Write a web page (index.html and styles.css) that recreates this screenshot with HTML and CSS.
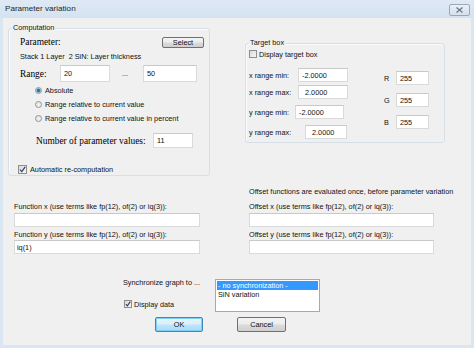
FILE: index.html
```html
<!DOCTYPE html>
<html>
<head>
<meta charset="utf-8">
<link rel="stylesheet" href="styles.css">
</head>
<body>
<div class="window">
  <div class="titlebar">
    <span class="title">Parameter variation</span>
    <span class="close"><svg width="7" height="6" viewBox="0 0 7 6"><path d="M0.5 0.5 L6.5 5.5 M6.5 0.5 L0.5 5.5" stroke="#6b7789" stroke-width="1.3" fill="none"/></svg></span>
  </div>
  <div class="client">
    <div class="top">
      <fieldset class="group comp">
        <legend>Computation</legend>
        <div class="gbody comp-body">
          <div class="row r-param"><span class="serif">Parameter:</span><button class="btn select">Select</button></div>
          <div class="row r-stack">Stack 1 Layer&nbsp; 2 SiN: Layer thickness</div>
          <div class="row r-range"><span class="serif lbl-range">Range:</span><input class="field f-r1" value="20"><span class="dots">...</span><input class="field f-r2" value="50"></div>
          <div class="radios">
            <div class="row rrow first"><span class="radio on"></span>Absolute</div>
            <div class="row rrow"><span class="radio"></span>Range relative to current value</div>
            <div class="row rrow"><span class="radio"></span>Range relative to current value in percent</div>
          </div>
          <div class="row r-num"><span class="serif lbl-num">Number of parameter values:</span><input class="field f-num" value="11"></div>
          <div class="row r-auto"><span class="check on"><svg width="7" height="7" viewBox="0 0 7 7"><path d="M1 3.6 L2.8 5.6 L6.2 0.8" stroke="#2b3f66" stroke-width="1.2" fill="none"/></svg></span>Automatic re-computation</div>
        </div>
      </fieldset>
      <fieldset class="group target">
        <legend>Target box</legend>
        <div class="gbody target-body">
          <div class="row r-disp"><span class="check small"></span>Display target box</div>
          <div class="tcols">
            <div class="tleft">
              <div class="row trow t1"><span class="tl l-x">x range min:</span><input class="field f-x" value="-2.0000"></div>
              <div class="row trow t2"><span class="tl l-x">x range max:</span><input class="field f-x pos" value="2.0000"></div>
              <div class="row trow t3"><span class="tl l-ymin">y range min:</span><input class="field f-ymin" value="-2.0000"></div>
              <div class="row trow t3"><span class="tl l-ymax">y range max:</span><input class="field f-ymax pos" value="2.0000"></div>
            </div>
            <div class="tright">
              <div class="row crow c1"><span class="cl">R</span><input class="field f-c" value="255"></div>
              <div class="row crow"><span class="cl">G</span><input class="field f-c" value="255"></div>
              <div class="row crow"><span class="cl">B</span><input class="field f-c" value="255"></div>
            </div>
          </div>
        </div>
      </fieldset>
    </div>
    <div class="middle">
      <div class="mcol mleft">
        <div class="mlabel">Function x (use terms like fp(12), of(2) or iq(3)):</div>
        <input class="field f-wide" value="">
        <div class="mlabel second">Function y (use terms like fp(12), of(2) or iq(3)):</div>
        <input class="field f-wide" value="iq(1)">
      </div>
      <div class="mcol mright">
        <div class="mlabel head">Offset functions are evaluated once, before parameter variation</div>
        <div class="mlabel sub">Offset x (use terms like fp(12), of(2) or iq(3)):</div>
        <input class="field f-wide" value="">
        <div class="mlabel second">Offset y (use terms like fp(12), of(2) or iq(3)):</div>
        <input class="field f-wide" value="">
      </div>
    </div>
    <div class="sync">
      <div class="sleft">
        <div class="slabel">Synchronize graph to ...</div>
        <div class="row r-data"><span class="check on small"><svg width="6" height="6" viewBox="0 0 7 7"><path d="M1 3.6 L2.8 5.6 L6.2 0.8" stroke="#2b3f66" stroke-width="1.3" fill="none"/></svg></span>Display data</div>
      </div>
      <div class="listbox">
        <div class="item sel">- no synchronization -</div>
        <div class="item">SiN variation</div>
      </div>
    </div>
    <div class="buttons">
      <button class="btn big ok">OK</button>
      <button class="btn big cancel">Cancel</button>
    </div>
  </div>
</div>
</body>
</html>
```
FILE: styles.css
```css
* { box-sizing: border-box; }
html, body { margin: 0; padding: 0; }
body {
  font-family: "Liberation Sans", Arial, sans-serif;
  font-size: 7.3px;
  color: #111;
  background: #f0f0f0;
}
.window {
  width: 474px;
  height: 348px;
  background: #f0f0f0;
  box-shadow: inset 3px 0 #dbe6f3, inset -3px 0 #dbe6f3, inset 0 -3px #dbe6f3;
  overflow: hidden;
}
.titlebar {
  height: 18px;
  display: flex;
  align-items: center;
  padding: 0 4px 0 5px;
  background: linear-gradient(#dfe9f5, #d4e2f1);
}
.title {
  font-size: 8.1px;
  color: #1f1f1f;
  line-height: 18px;
}
.close {
  margin-left: auto;
  width: 21px;
  height: 12px;
  margin-top: 2px;
  border: 1px solid #9aa8bb;
  border-radius: 2px;
  background: linear-gradient(#e9eff7, #d6e0ec);
  display: flex;
  align-items: center;
  justify-content: center;
}
.close svg { display: block; }
.client { padding: 0; }

.top {
  display: flex;
  align-items: flex-start;
  margin-top: 4px;
}
.group {
  margin: 0;
  padding: 0;
  border: 1px solid #d5dfe5;
  border-radius: 3px;
  box-shadow: inset 1px 1px #fbfbfb;
  min-width: 0;
}
.group legend {
  margin-left: 3px;
  padding: 0 1px;
  line-height: 12px;
  font-size: 7.3px;
  color: #111;
}
.comp { margin-left: 8px; width: 202px; }
.target { margin-left: 35px; margin-top: 15px; width: 200px; }

.row {
  display: flex;
  align-items: center;
  white-space: nowrap;
}
.serif {
  font-family: "Liberation Serif", "Times New Roman", serif;
  font-size: 9.4px;
  color: #000;
}
.comp-body { padding: 2px 5px 0 11px; }
.r-param { height: 12px; }
.btn {
  font-family: "Liberation Sans", Arial, sans-serif;
  font-size: 7.3px;
  color: #111;
  padding: 0;
  border: 1px solid #707070;
  border-radius: 2px;
  background: linear-gradient(#f3f3f3 0%, #ececec 48%, #dcdcdc 52%, #cfcfcf 100%);
}
.select { margin-left: auto; width: 42px; height: 11px; line-height: 9px; }
.r-stack { margin-top: 2px; height: 12px; }
.r-range { margin-top: 3px; height: 17px; }
.lbl-range { width: 40px; }
.field {
  font-family: "Liberation Sans", Arial, sans-serif;
  font-size: 7.3px;
  color: #111;
  background: #fff;
  border: 1px solid #dadada;
  border-top-color: #c9c9c9;
  padding: 0 0 0 3px;
  margin: 0;
  outline: none;
}
.f-r1 { width: 50px; height: 17px; }
.dots { width: 33px; padding-left: 12px; }
.f-r2 { width: 54px; height: 17px; }
.radios { margin-left: 15px; }
.rrow { height: 12px; margin-top: 2px; }
.radio {
  width: 7px;
  height: 7px;
  border-radius: 50%;
  border: 1px solid #969696;
  background: radial-gradient(circle at 60% 60%, #f6f6f6, #d8d8d8);
  margin-right: 3px;
  flex: none;
}
.radio.on {
  background: radial-gradient(circle, #2e5f8c 0, #3b86b8 1.6px, #bfe0f2 2.4px, #e8e8e8 3px);
}
.r-num { margin-top: 9px; height: 15px; margin-left: 16px; }
.lbl-num { width: 117px; }
.f-num { width: 40px; height: 15px; }
.r-auto { margin-top: 15px; height: 12px; margin-left: -2px; }
.check {
  width: 9px;
  height: 9px;
  border: 1px solid #8e8f8f;
  background: linear-gradient(135deg, #d9d9d9, #f7f7f7);
  margin-right: 3px;
  flex: none;
  display: flex;
  align-items: center;
  justify-content: center;
}
.check svg { display: block; }
.check.small { width: 8px; height: 8px; margin-right: 2px; }

.target-body { padding: 0 0 3px 3px; }
.r-disp { height: 10px; }
.tcols { display: flex; align-items: flex-start; }
.tleft { width: 99px; }
.trow { height: 14px; }
.t1 { margin-top: 9px; }
.t2 { margin-top: 3px; }
.t3 { margin-top: 6px; }
.tl { flex: none; }
.l-x { width: 49px; }
.l-ymin { width: 46px; }
.l-ymax { width: 56px; }
.f-x { width: 50px; height: 14px; }
.f-ymin { width: 49px; height: 14px; }
.f-ymax { width: 42px; height: 14px; }
.field.pos { padding-left: 6px; }
.tright { margin-left: 36px; }
.crow { height: 14px; margin-top: 8px; }
.c1 { margin-top: 12px; }
.cl { width: 12px; }
.f-c { width: 33px; height: 14px; }

.middle { display: flex; margin-top: 10px; }
.mcol { display: flex; flex-direction: column; }
.mleft { margin-left: 14px; width: 186px; padding-top: 15px; }
.mright { margin-left: 49px; width: 185px; }
.mlabel { line-height: 12px; height: 12px; white-space: nowrap; }
.mlabel.sub { margin-top: 3px; }
.mlabel.second { margin-top: 3px; line-height: 10px; height: 10px; }
.f-wide { width: 100%; height: 14px; padding-left: 2px; }

.sync { display: flex; margin-top: 25px; padding-left: 123px; }
.sleft { width: 92px; }
.slabel { line-height: 12px; margin-top: -2px; white-space: nowrap; }
.r-data { margin-top: 9px; height: 12px; margin-left: 1px; }
.listbox {
  width: 105px;
  height: 33px;
  background: #fff;
  border: 1px solid #a9a9a9;
  padding: 1px;
}
.item { line-height: 9px; height: 9px; padding-left: 1px; white-space: nowrap; }
.item.sel { background: #3399ff; color: #fff; }

.buttons { display: flex; margin-top: 5px; padding-left: 155px; }
.big { height: 15px; line-height: 13px; }
.ok {
  width: 48px;
  border-color: #3c88bd;
  background: linear-gradient(#e6f5fd 0%, #d9f0fc 48%, #bee6fd 52%, #a7d9f5 100%);
  box-shadow: inset 0 0 0 1px #7fd0f4;
}
.cancel { width: 49px; margin-left: 34px; }
```
